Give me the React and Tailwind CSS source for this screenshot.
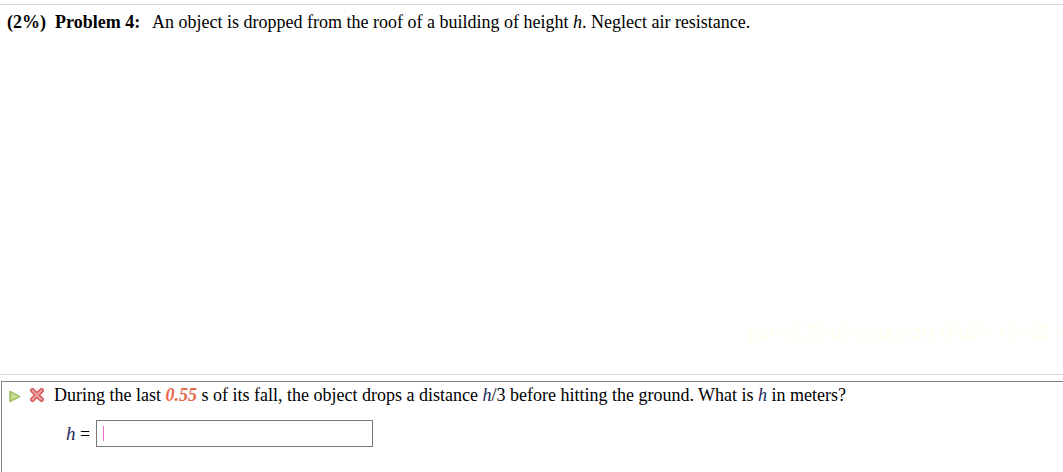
export default function App() {
    return (
        <div className="w-[1063px] h-[472px] overflow-hidden bg-white text-black font-['Liberation_Serif',serif] relative">
            <div className="pt-1">
                <div className="border-t border-[#d9d9d9]" />
            </div>

            {/* problem statement */}
            <div className="pl-[7px] pt-[6px] h-[369px] text-[18px] leading-[22px] flex">
                <span className="font-bold whitespace-pre w-[145px] shrink-0">(2%)  Problem 4:</span>
                <span>
                    An object is dropped from the roof of a building of height <i>h</i>. Neglect air resistance.
                </span>
            </div>

            {/* faint watermark */}
            <div className="absolute left-[748px] top-[317px] w-[315px] overflow-hidden text-[21px] text-[#fffff2] whitespace-nowrap font-['Open_Sans',sans-serif]">
                gcm5354@psu.edu 0R65-13-44-4
            </div>

            <div className="border-t border-[#d9d9d9]" />

            {/* question box */}
            <div className="mt-[6px] ml-px border-l border-t border-[#808080] h-[120px] pt-[2px]">
                <div className="flex items-center pl-[6px] text-[18px] leading-[22px]">
                    <svg width="13" height="13" viewBox="0 0 13 13" className="mr-[8px] mt-[3px] shrink-0">
                        <defs>
                            <linearGradient id="tri" x1="0" y1="0" x2="1" y2="0">
                                <stop offset="0" stopColor="#b9d57a" />
                                <stop offset="1" stopColor="#e2efc0" />
                            </linearGradient>
                        </defs>
                        <path d="M2 1.5 L11.5 6.5 L2 11.5 Z" fill="url(#tri)" stroke="#a3c066" strokeWidth="1.6" strokeLinejoin="round" />
                    </svg>
                    <svg width="16" height="16" viewBox="0 0 16 16" className="mr-[9px] shrink-0">
                        <path d="M3.5 3.5 L12.5 12.5 M12.5 3.5 L3.5 12.5" stroke="#d96464" strokeWidth="5" strokeLinecap="round" />
                        <path d="M3.5 3.5 L12.5 12.5 M12.5 3.5 L3.5 12.5" stroke="#f0a8a8" strokeWidth="1.6" strokeLinecap="round" />
                    </svg>
                    <span className="whitespace-nowrap">
                        During the last <i className="font-bold text-[#e8684a]">0.55</i> s of its fall, the object drops a distance <i className="text-[#1a2a5a]">h</i>/3 before hitting the ground. What is <i className="text-[#1a2a5a]">h</i> in meters?
                    </span>
                </div>
                <div className="flex items-center mt-[14px] pl-[64px]">
                    <span className="text-[18px] leading-[22px] mr-[6px] whitespace-nowrap">
                        <i className="text-[19px] text-[#1a2a5a]">h</i> =
                    </span>
                    <div className="w-[277px] h-[27px] border border-[#777777] bg-white flex items-center pl-[6px]">
                        <div className="w-px h-[15px] bg-[#f06cc8]" />
                    </div>
                </div>
            </div>
        </div>
    );
}
